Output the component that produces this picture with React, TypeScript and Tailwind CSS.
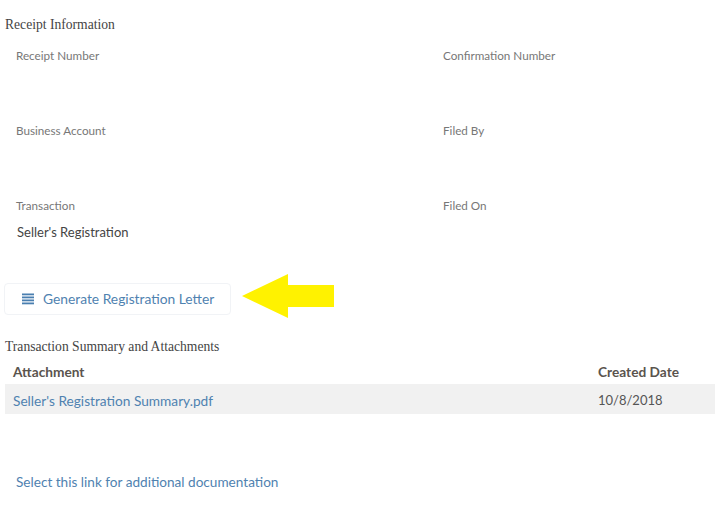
const lato = "font-['Lato',sans-serif]";
const times = "font-['Liberation_Serif',serif]";

function Heading({ children }: { children: string }) {
  return <div className={`${times} pl-[5px] text-[13.6px] leading-[18px] text-[#444444]`}>{children}</div>;
}

function Field({ label, value }: { label: string; value?: string }) {
  return (
    <div className="h-[75px]">
      <div className="text-[11.7px] leading-[16px] text-[#777777]">{label}</div>
      {value ? <div className="mt-[10px] pl-px text-[13px] leading-[18px] text-[#444444]">{value}</div> : null}
    </div>
  );
}

function ListIcon() {
  return (
    <svg width="12" height="12" viewBox="0 0 12 12" className="shrink-0" fill="#4a7fb0">
      <rect x="0" y="0.5" width="12" height="1.8" />
      <rect x="0" y="3.5" width="12" height="1.8" />
      <rect x="0" y="6.5" width="12" height="1.8" />
      <rect x="0" y="9.5" width="12" height="1.8" />
    </svg>
  );
}

function Arrow() {
  return (
    <svg width="92" height="44" viewBox="0 0 92 44" className="shrink-0">
      <polygon points="0,22 46,0 46,11 92,11 92,33 46,33 46,44" fill="#fff200" />
    </svg>
  );
}

export default function App() {
  return (
    <div className={`${lato} h-[514px] w-[715px] overflow-hidden bg-white pt-4`}>
      <Heading>Receipt Information</Heading>
      <div className="mt-[13px] grid grid-cols-[427px_1fr] pl-4">
        <Field label="Receipt Number" />
        <Field label="Confirmation Number" />
        <Field label="Business Account" />
        <Field label="Filed By" />
        <Field label="Transaction" value="Seller's Registration" />
        <Field label="Filed On" />
      </div>
      <div className="mt-[2px] flex items-start pl-1">
        <button className="mt-[9px] flex h-[32px] w-[227px] items-center gap-[9px] rounded-[4px] border border-[#f1f3f6] bg-white pl-[17px] text-[13.8px] text-[#4f82b0]">
          <ListIcon />
          Generate Registration Letter
        </button>
        <div className="ml-[11px]">
          <Arrow />
        </div>
      </div>
      <div className="mt-[20px]">
        <Heading>Transaction Summary and Attachments</Heading>
      </div>
      <div className="ml-[5px] mt-[4px] grid grid-cols-[585px_1fr] pl-2 text-[13.7px] font-bold leading-[24px] text-[#5a544e]">
        <div>Attachment</div>
        <div>Created Date</div>
      </div>
      <div className="ml-[5px] grid h-[30px] grid-cols-[585px_1fr] items-center bg-[#f1f1f1] pl-2 pt-1 text-[13.7px]">
        <a className="text-[#4f82b0]">Seller's Registration Summary.pdf</a>
        <div className="text-[13px] text-[#555555]">10/8/2018</div>
      </div>
      <a className="mt-[58px] block pl-4 text-[13.6px] leading-[20px] text-[#4f82b0]">
        Select this link for additional documentation
      </a>
    </div>
  );
}
